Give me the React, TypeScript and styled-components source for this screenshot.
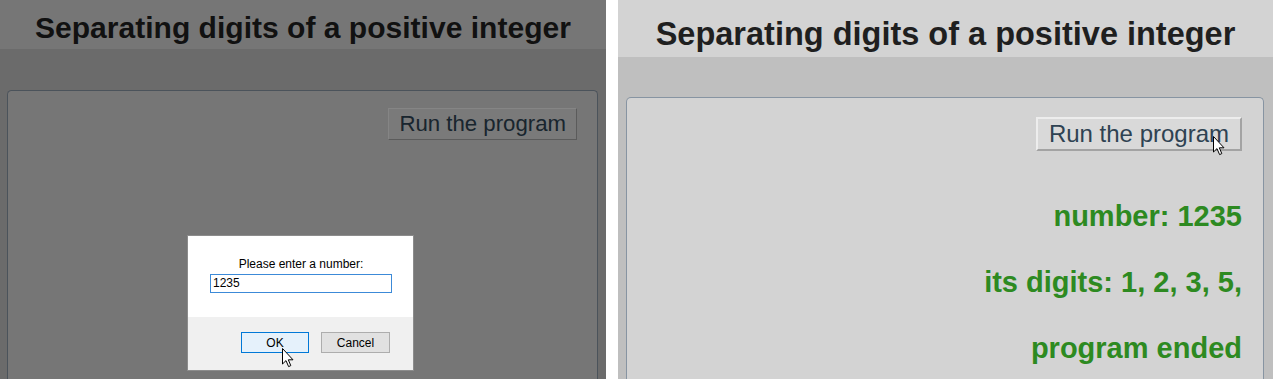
import styled, { createGlobalStyle } from 'styled-components';

const Global = createGlobalStyle`
    html, body {
        margin: 0;
        padding: 0;
        background: #ffffff;
    }
    body {
        font-family: "Liberation Sans", Arial, sans-serif;
    }
`;

const Screen = styled.div`
    width: 1286px;
    height: 388px;
    display: flex;
    align-items: flex-start;
    gap: 12px;
    background: #ffffff;
    overflow: hidden;
`;

const Panel = styled.div<{ $w: number }>`
    position: relative;
    width: ${p => p.$w}px;
    height: 379px;
    overflow: hidden;
    flex-shrink: 0;
`;

const Shot = styled.div<{ $zoom: number }>`
    zoom: ${p => p.$zoom};
    width: 655px;
    height: ${p => Math.ceil(379 / p.$zoom)}px;
    display: flex;
    flex-direction: column;
`;

const Header = styled.header<{ $h: number }>`
    height: ${p => p.$h}px;
    box-sizing: border-box;
    padding-top: ${p => p.$h - 41}px;
    background: #d3d3d3;
    text-align: center;
`;

const Title = styled.h1`
    margin: 0;
    font-family: "Liberation Sans", Arial, sans-serif;
    font-size: 32.5px;
    line-height: 37px;
    font-weight: 700;
    color: #1f1f1f;
`;

const Body = styled.main<{ $top: number }>`
    flex: 1;
    display: flex;
    padding: ${p => p.$top}px 9px 0 8px;
    background: #bfbfbf;
`;

const Card = styled.section`
    flex: 1;
    display: flex;
    flex-direction: column;
    align-items: flex-end;
    padding: 19px 21px 0 20px;
    background: #d3d3d3;
    border: 1px solid #8794a2;
    border-bottom: none;
    border-radius: 5px 5px 0 0;
`;

const RunButton = styled.button`
    height: 34px;
    padding: 0 11px;
    font-family: "Liberation Sans", Arial, sans-serif;
    font-size: 24px;
    color: #2e4252;
    background: #d9d9d9;
    border: 2px solid;
    border-color: #ededed #a3a3a3 #a3a3a3 #ededed;
    cursor: default;
`;

const Output = styled.div`
    margin-top: 49px;
    display: flex;
    flex-direction: column;
    align-items: flex-end;
    gap: 33px;
`;

const Line = styled.p`
    margin: 0;
    font-family: "Liberation Sans", Arial, sans-serif;
    font-size: 29px;
    line-height: 33px;
    font-weight: 700;
    color: #2d8a21;
`;

const Backdrop = styled.div`
    position: absolute;
    inset: 0;
    background: rgba(0, 0, 0, 0.44);
    display: flex;
    justify-content: flex-start;
    align-items: flex-start;
    padding: 235px 0 0 187px;
`;

const Dialog = styled.div`
    width: 227px;
    box-sizing: border-box;
    border: 1px solid #8c8c8c;
    background: #ffffff;
    font-family: "Liberation Sans", Arial, sans-serif;
    font-size: 12px;
    color: #000000;
`;

const Prompt = styled.div`
    padding: 21px 21px 24px 22px;
    display: flex;
    flex-direction: column;
    gap: 2px;
`;

const Label = styled.label`
    display: block;
    text-align: center;
    line-height: 15px;
`;

const Field = styled.div`
    height: 19px;
    box-sizing: border-box;
    border: 1px solid #3c8ad8;
    padding: 0 2px;
    line-height: 17px;
`;

const Footer = styled.div`
    display: flex;
    justify-content: flex-end;
    gap: 12px;
    padding: 15px 23px 17px 0;
    background: #f0f0f0;
`;

const DialogButton = styled.button<{ $primary?: boolean }>`
    width: ${p => (p.$primary ? 68 : 69)}px;
    height: 21px;
    padding: 0;
    font-family: "Liberation Sans", Arial, sans-serif;
    font-size: 12px;
    color: #000000;
    background: ${p => (p.$primary ? '#e5f1fb' : '#e1e1e1')};
    border: 1px solid ${p => (p.$primary ? '#0078d7' : '#adadad')};
`;

const Pointer = styled.svg<{ $x: number; $y: number }>`
    position: absolute;
    left: ${p => p.$x}px;
    top: ${p => p.$y}px;
    width: 13px;
    height: 20px;
    overflow: visible;
`;

const Cursor = ({ x, y }: { x: number; y: number }) => (
    <Pointer $x={x} $y={y} viewBox="0 0 13 20">
        <path
            d="M0.5 0.5 L0.5 16 L4 12.6 L6.6 18.6 L8.8 17.6 L6.3 11.8 L11 11.8 Z"
            fill="#ffffff"
            stroke="#000000"
            strokeWidth="1"
            strokeLinejoin="round"
        />
    </Pointer>
);

// the same page twice: once waiting for input, once after the run
const Page = ({ lines, head = 57, top = 40 }: { lines?: string[]; head?: number; top?: number }) => (
    <>
        <Header $h={head}>
            <Title>Separating digits of a positive integer</Title>
        </Header>
        <Body $top={top}>
            <Card>
                <RunButton>Run the program</RunButton>
                {lines && (
                    <Output>
                        {lines.map(l => (
                            <Line key={l}>{l}</Line>
                        ))}
                    </Output>
                )}
            </Card>
        </Body>
    </>
);

const App = () => {
    return (
        <Screen>
            <Global />
            <Panel $w={606}>
                <Shot $zoom={0.925}>
                    <Page head={53} top={44} />
                </Shot>
                <Backdrop>
                    <Dialog>
                        <Prompt>
                            <Label>Please enter a number:</Label>
                            <Field>1235</Field>
                        </Prompt>
                        <Footer>
                            <DialogButton $primary>OK</DialogButton>
                            <DialogButton>Cancel</DialogButton>
                        </Footer>
                    </Dialog>
                </Backdrop>
                <Cursor x={282} y={348} />
            </Panel>
            <Panel $w={655}>
                <Shot $zoom={1}>
                    <Page lines={['number: 1235', 'its digits: 1, 2, 3, 5,', 'program ended']} />
                </Shot>
                <Cursor x={595} y={136} />
            </Panel>
        </Screen>
    );
};

export default App;
